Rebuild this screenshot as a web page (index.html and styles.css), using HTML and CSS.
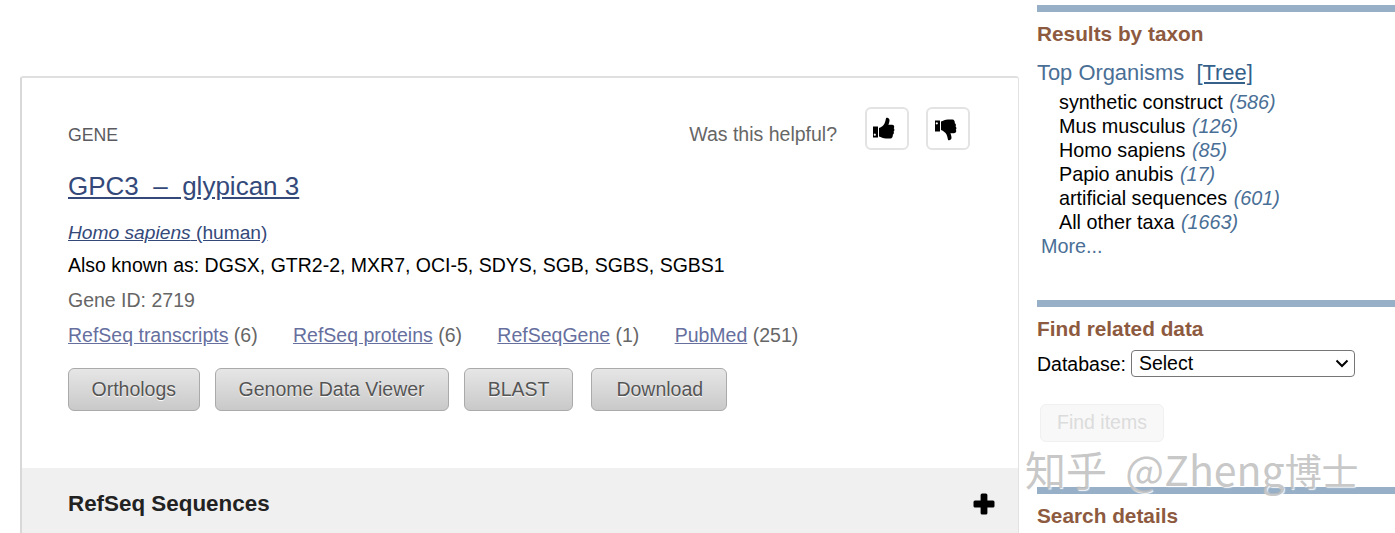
FILE: index.html
```html
<!DOCTYPE html>
<html lang="en">
<head>
    <meta charset="UTF-8">
    <meta name="viewport" content="width=device-width, initial-scale=1.0">
    <title>GPC3 - Gene</title>
    <link rel="stylesheet" href="styles.css">
</head>
<body>
    <div class="page">
        <div class="main">
            <div class="card">
                <div class="card-body">
                    <div class="card-top">
                        <div class="gene-label">GENE</div>
                        <div class="helpful">
                            <span class="helpful-text">Was this helpful?</span>
                            <button class="thumb">
                                <svg width="24" height="24" viewBox="0 0 24 24"><path fill-rule="evenodd" d="M0 9.5h5v11H0z M1.8 16.6a1.1 1.1 0 1 0 .01 0z"/><path d="M6 11c2.5-1 4.5-2.5 5.5-4.5.8-1.6 1-3.5 1.6-5.5 2-.8 3.6.8 3.4 2.8-.1 1.4-.6 2.8-1.1 4h3.6c2 0 2.9 2 1.8 3.4.9 1 .8 2.6-.2 3.4.6 1.1.3 2.5-.8 3.1.3 1.8-.7 3.8-2.4 3.8H13c-3 0-5-1.5-7-2z"/></svg>
                            </button>
                            <button class="thumb">
                                <svg width="24" height="24" viewBox="0 0 24 24"><g transform="matrix(1 0 0 -1 1 24)"><path fill-rule="evenodd" d="M0 9.5h5v11H0z M1.8 16.6a1.1 1.1 0 1 0 .01 0z"/><path d="M6 11c2.5-1 4.5-2.5 5.5-4.5.8-1.6 1-3.5 1.6-5.5 2-.8 3.6.8 3.4 2.8-.1 1.4-.6 2.8-1.1 4h3.6c2 0 2.9 2 1.8 3.4.9 1 .8 2.6-.2 3.4.6 1.1.3 2.5-.8 3.1.3 1.8-.7 3.8-2.4 3.8H13c-3 0-5-1.5-7-2z"/></g></svg>
                            </button>
                        </div>
                    </div>
                    <h1 class="gene-title"><a href="#">GPC3 &nbsp;&ndash;&nbsp; glypican 3</a></h1>
                    <div class="organism"><a href="#"><em>Homo sapiens</em> (human)</a></div>
                    <div class="aliases">Also known as: DGSX, GTR2-2, MXR7, OCI-5, SDYS, SGB, SGBS, SGBS1</div>
                    <div class="gene-id">Gene ID: 2719</div>
                    <div class="links">
                        <span><a href="#">RefSeq transcripts</a> (6)</span>
                        <span><a href="#">RefSeq proteins</a> (6)</span>
                        <span><a href="#">RefSeqGene</a> (1)</span>
                        <span><a href="#">PubMed</a> (251)</span>
                    </div>
                    <div class="actions">
                        <button class="action">Orthologs</button>
                        <button class="action">Genome Data Viewer</button>
                        <button class="action">BLAST</button>
                        <button class="action">Download</button>
                    </div>
                </div>
                <div class="card-section">
                    <span>RefSeq Sequences</span>
                    <svg width="22" height="22" viewBox="0 0 22 22"><rect x="7.6" y="0.5" width="6.8" height="21" rx="1.5"/><rect x="0.5" y="7.6" width="21" height="6.8" rx="1.5"/></svg>
                </div>
            </div>
        </div>

        <div class="sidebar">
            <div class="portlet taxon">
                <h3>Results by taxon</h3>
                <div class="top-org">Top Organisms &nbsp;<a href="#">[Tree]</a></div>
                <ul class="taxa">
                    <li>synthetic construct <em>(586)</em></li>
                    <li>Mus musculus <em>(126)</em></li>
                    <li>Homo sapiens <em>(85)</em></li>
                    <li>Papio anubis <em>(17)</em></li>
                    <li>artificial sequences <em>(601)</em></li>
                    <li>All other taxa <em>(1663)</em></li>
                </ul>
                <div class="more">More...</div>
            </div>
            <div class="portlet related">
                <h3>Find related data</h3>
                <div class="db-row">
                    <label for="db">Database:</label>
                    <div class="db-select">
                        <select id="db"><option>Select</option></select>
                        <svg class="chevron" width="14" height="9" viewBox="0 0 14 9"><path d="M1.5 1.5L7 7l5.5-5.5" fill="none" stroke="#000" stroke-width="2"/></svg>
                    </div>
                </div>
                <button class="find" disabled>Find items</button>
            </div>
            <div class="portlet details">
                <h3>Search details</h3>
            </div>
        </div>
    </div>
    <div class="watermark">知乎  @Zheng<span class="watermark-end">博士</span></div>
</body>
</html>
```
FILE: styles.css
```css
* {
    margin: 0;
    padding: 0;
    box-sizing: border-box;
}

html, body {
    height: 533px;
    overflow: hidden;
}

body {
    font-family: "Liberation Sans", Arial, sans-serif;
    background: white;
    color: #000;
    position: relative;
}

a {
    color: #666f9e;
}

.page {
    display: flex;
    align-items: flex-start;
}

.main {
    width: 1037px;
    padding: 76px 18px 0 20px;
    flex-shrink: 0;
}

.card {
    border-top: 2px solid #e0e0e0;
    border-left: 2px solid #d8d8d8;
    border-right: 1px solid #e2e2e2;
    border-radius: 3px 3px 0 0;
    height: 480px;
}

.card-body {
    padding: 28px 48px 0 46px;
    height: 390px;
}

.card-top {
    display: flex;
    justify-content: space-between;
    align-items: flex-start;
    height: 65px;
}

.gene-label {
    font-size: 17.7px;
    color: #5a5a60;
    margin-top: 19px;
}

.helpful {
    display: flex;
    align-items: flex-start;
    margin-top: 1px;
}

.helpful-text {
    font-size: 19.5px;
    color: #666;
    margin: 16px 28px 0 0;
}

.thumb {
    width: 44px;
    height: 43px;
    background: white;
    border: 2px solid #e3e3e3;
    border-radius: 6px;
    display: flex;
    align-items: center;
    justify-content: center;
}

.thumb svg {
    margin-left: -4px;
}

.thumb + .thumb {
    margin-left: 17px;
}

.gene-title {
    font-size: 26px;
    font-weight: normal;
    line-height: 30px;
}

.gene-title a {
    color: #34497a;
}

.organism {
    font-size: 19.2px;
    line-height: 22px;
    margin-top: 21px;
}

.organism a {
    color: #34497a;
}

.aliases {
    font-size: 19.5px;
    line-height: 22px;
    margin-top: 10px;
}

.gene-id {
    font-size: 19.5px;
    line-height: 22px;
    color: #666;
    margin-top: 13px;
}

.links {
    display: flex;
    gap: 35.3px;
    font-size: 19.5px;
    line-height: 22px;
    color: #666;
    margin-top: 13px;
}

.actions {
    display: flex;
    gap: 15px;
    margin-top: 22px;
}

.action {
    height: 43px;
    padding: 0 23px;
    font-family: inherit;
    font-size: 19.5px;
    color: #555;
    background: linear-gradient(#e6e6e6, #c9c9c9);
    border: 1px solid #aaa;
    border-radius: 6px;
    text-shadow: 0 1px 1px #fff;
}

.action:first-child {
    padding: 0 22.5px;
}

.action:last-child {
    margin-left: 3px;
    padding: 0 23px 0 24px;
}

.card-section {
    background: #f0f0f0;
    height: 71px;
    padding: 0 23px 0 46px;
    display: flex;
    justify-content: space-between;
    align-items: center;
    font-size: 22.4px;
    font-weight: bold;
    color: #222;
}

.sidebar {
    flex: 1;
    min-width: 0;
    padding-top: 5px;
}

.portlet {
    border-top: 7px solid #97b0c8;
}

.portlet h3 {
    font-size: 20.8px;
    line-height: 24px;
    color: #8d5a40;
}

.taxon {
    height: 295px;
    padding-top: 10px;
}

.top-org {
    font-size: 21.9px;
    line-height: 26px;
    color: #4a6f96;
    margin-top: 14px;
}

.top-org a {
    color: #34608a;
}

.taxa {
    list-style: none;
    padding-left: 22px;
    font-size: 19.8px;
    line-height: 24px;
    margin-top: 4px;
}

.taxa em {
    color: #4a6f96;
    margin-left: 1px;
}

.more {
    font-size: 19.8px;
    line-height: 24px;
    color: #4a6f96;
    padding-left: 4px;
}

.related {
    height: 187px;
    padding-top: 10px;
}

.db-row {
    display: flex;
    align-items: center;
    gap: 5px;
    font-size: 19.5px;
    margin-top: 9px;
}

.db-row label {
    padding-top: 1px;
}

.db-select {
    position: relative;
    width: 224px;
    height: 27px;
}

.db-select select {
    appearance: none;
    width: 100%;
    height: 100%;
    padding: 0 0 2px 7px;
    font-family: inherit;
    font-size: 19.5px;
    background: white;
    border: 1px solid #767676;
    border-radius: 4px;
}

.chevron {
    position: absolute;
    right: 6px;
    top: 9px;
}

.find {
    display: block;
    width: 124px;
    height: 38px;
    margin: 27px 0 0 3px;
    padding-bottom: 2px;
    font-family: inherit;
    font-size: 19.5px;
    color: #dcdcdc;
    background: #f8f8f8;
    border: 1px solid #f0f0f0;
    border-radius: 6px;
}

.details {
    padding-top: 10px;
}

.watermark {
    position: absolute;
    left: 1025px;
    top: 444px;
    font-family: "Noto Sans CJK SC", "Noto Sans", sans-serif;
    font-size: 41px;
    line-height: 48px;
    color: rgba(185, 185, 185, 0.8);
    white-space: pre;
    text-shadow: 1px 1px 1px rgba(255, 255, 255, 0.9);
}

.watermark-end {
    font-size: 37px;
}
```
